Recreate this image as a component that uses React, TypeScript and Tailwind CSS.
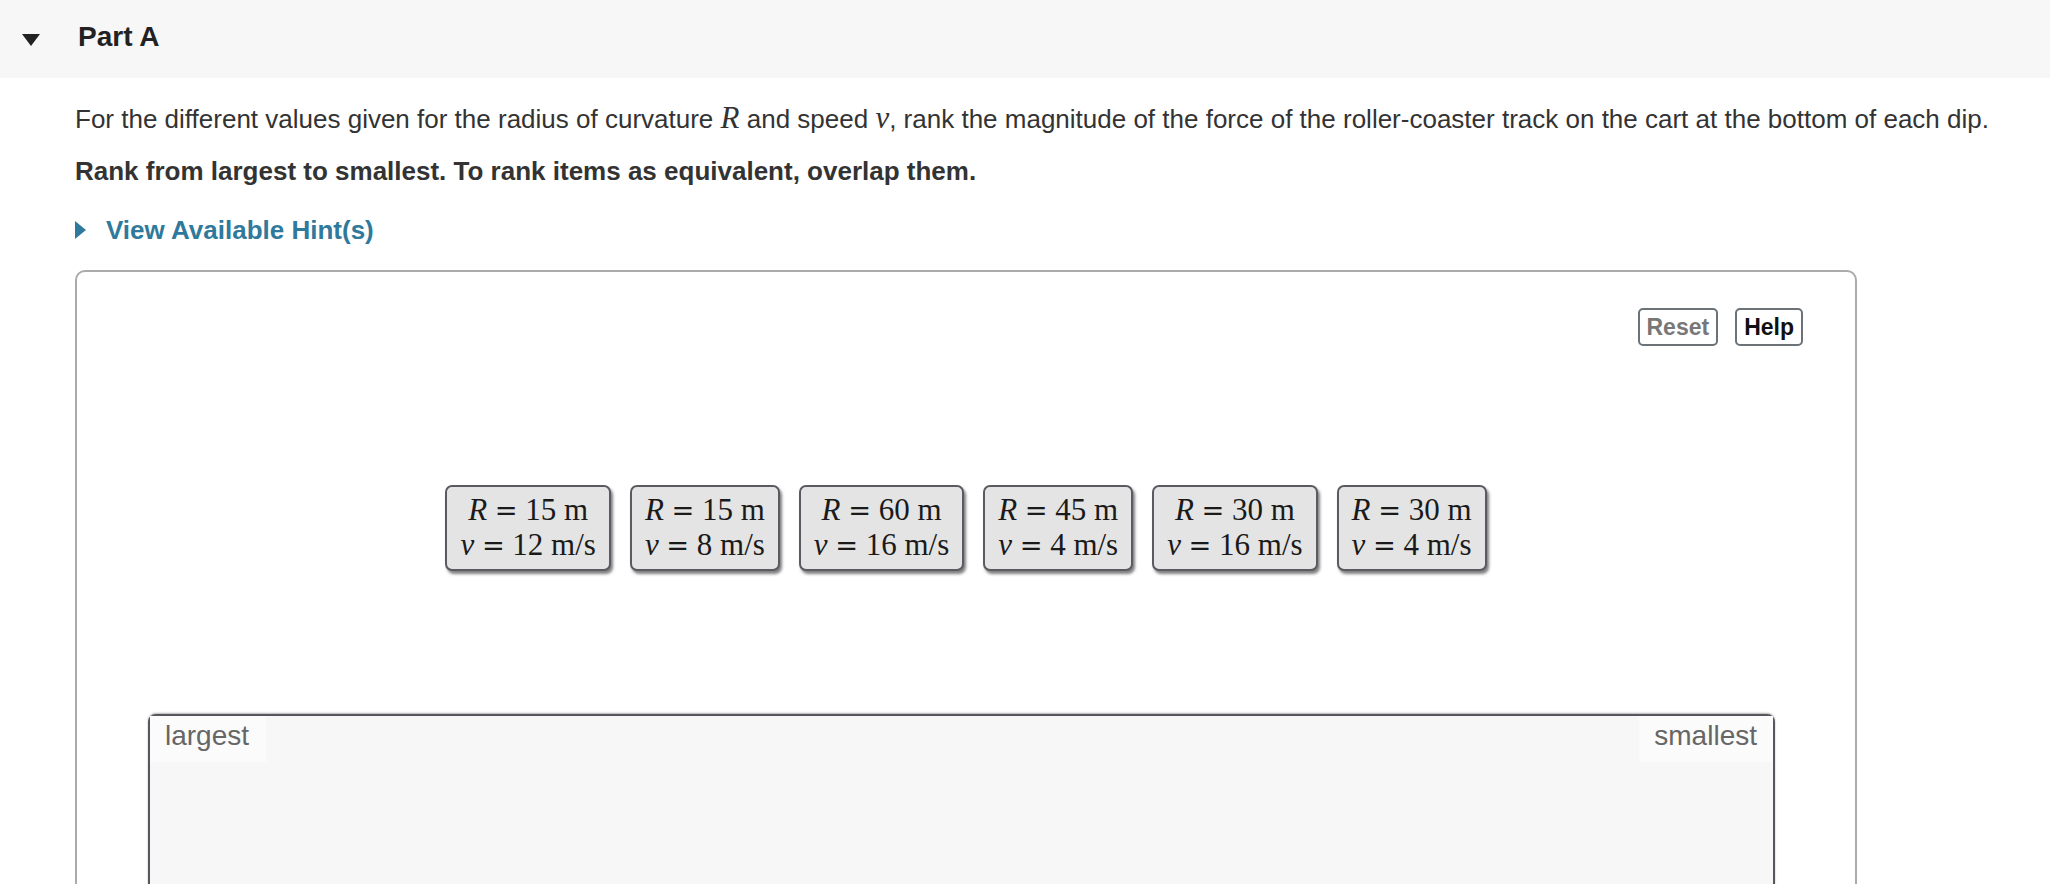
import { FC } from "react";

interface CardProps {
  r: string;
  v: string;
}

const items: CardProps[] = [
  { r: "15", v: "12" },
  { r: "15", v: "8" },
  { r: "60", v: "16" },
  { r: "45", v: "4" },
  { r: "30", v: "16" },
  { r: "30", v: "4" },
];

// equals sign with math-style spacing on both sides
const Eq: FC = () => (
  <span className="mx-[0.28em] font-['DejaVu_Serif',serif] text-[0.88em]">=</span>
);

const Card: FC<CardProps> = ({ r, v }) => {
  return (
    <div className="rounded-[7px] border-2 border-[#5a5b61] bg-[#e4e4e4] px-[13px] py-[6px] shadow-[2px_3px_3px_rgba(0,0,0,0.5)] text-center font-['Liberation_Serif',serif] text-[31px] leading-[34px] text-[#1a1a1a] whitespace-nowrap">
      <div>
        <i>R</i>
        <Eq />
        {r}
        <span className="ml-[0.25em]">m</span>
      </div>
      <div>
        <i>v</i>
        <Eq />
        {v}
        <span className="ml-[0.25em]">m/s</span>
      </div>
    </div>
  );
};

const App: FC = () => {
  return (
    <div className="min-h-screen bg-white font-['Liberation_Sans',Arial,sans-serif] text-[#333]">
      <div className="flex h-[78px] items-center bg-[#f7f7f7] pl-[22px]">
        <svg width="18" height="12" viewBox="0 0 18 12" className="mt-[1px]">
          <path d="M0 0 H18 L9 12 Z" fill="#222" />
        </svg>
        <h2 className="ml-[38px] -mt-[4px] text-[28px] font-bold text-[#222]">Part A</h2>
      </div>

      <div className="pl-[75px]">
        <p className="mt-[25px] whitespace-nowrap text-[26px] leading-[30px]">
          For the different values given for the radius of curvature{" "}
          <i className="font-['Liberation_Serif',serif] text-[31px]">R</i> and speed{" "}
          <i className="font-['Liberation_Serif',serif] text-[31px]">v</i>, rank the magnitude of the force of the
          roller-coaster track on the cart at the bottom of each dip.
        </p>
        <p className="mt-[22px] text-[26px] font-bold leading-[30px]">
          Rank from largest to smallest. To rank items as equivalent, overlap them.
        </p>

        <div className="mt-[29px] flex items-center gap-[20px] text-[#2f7a9c]">
          <svg width="11" height="18" viewBox="0 0 11 18">
            <path d="M0 0 L11 9 L0 18 Z" fill="#2f7a9c" />
          </svg>
          <span className="text-[26px] font-bold leading-[30px]">View Available Hint(s)</span>
        </div>

        <div className="mt-[25px] h-[640px] w-[1782px] rounded-t-[10px] border-2 border-[#ababab] pt-[36px]">
          <div className="flex justify-end gap-[17px] pr-[52px]">
            <button className="h-[38px] rounded-[5px] border-2 border-[#6b7378] px-[7px] text-[23px] font-bold text-[#777]">
              Reset
            </button>
            <button className="h-[38px] rounded-[5px] border-2 border-[#6b7378] px-[7px] text-[23px] font-bold text-[#111]">
              Help
            </button>
          </div>

          <div className="mt-[139px] flex justify-center gap-[19px]">
            {items.map((it, i) => (
              <Card key={i} r={it.r} v={it.v} />
            ))}
          </div>

          <div className="ml-[71px] mt-[143px] h-[300px] w-[1627px] rounded-t-[8px] border-2 border-[#55565e] bg-[#f7f7f7] shadow-[0_-1px_2px_rgba(0,0,0,0.3)]">
            <div className="flex justify-between text-[28px] leading-[32px] text-[#666]">
              <span className="bg-[#fbfbfb] pl-[15px] pr-[17px] pt-[4px] pb-[10px]">largest</span>
              <span className="bg-[#fbfbfb] pl-[15px] pr-[16px] pt-[4px] pb-[10px]">smallest</span>
            </div>
          </div>
        </div>
      </div>
    </div>
  );
};

export default App;
